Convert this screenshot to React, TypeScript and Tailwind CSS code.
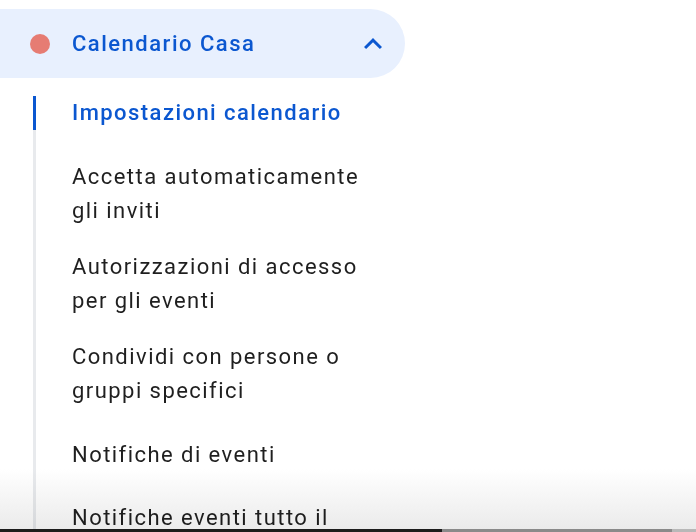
const items = [
  { label: "Impostazioni calendario", active: true, gap: "mt-0" },
  { label: "Accetta automaticamente gli inviti", gap: "mt-[30px]" },
  { label: "Autorizzazioni di accesso per gli eventi", gap: "mt-[22px]" },
  { label: "Condividi con persone o gruppi specifici", gap: "mt-[22px]" },
  { label: "Notifiche di eventi", gap: "mt-[30px]" },
  { label: "Notifiche eventi tutto il giorno", gap: "mt-[29px]" },
];

export default function App() {
  return (
    <div
      className="relative flex h-[532px] w-[696px] flex-col overflow-hidden bg-white"
      style={{ fontFamily: "Roboto, 'Noto Sans', sans-serif" }}
    >
      <div className="flex-1 overflow-hidden">
        {/* Calendar header */}
        <div className="mt-[9px] flex h-[69px] w-[405px] items-center rounded-r-full bg-[#e8f0fe] pl-[30px] pr-[14px]">
          <span className="h-[20px] w-[20px] shrink-0 rounded-full bg-[#e67c73]" />
          <span className="ml-[22px] flex-1 text-[22px] font-medium tracking-[1.5px] text-[#0b57d0]">
            Calendario Casa
          </span>
          <svg viewBox="0 0 24 24" className="h-[36px] w-[36px] fill-[#0b57d0]">
            <path d="M12 8l-6 6 1.41 1.41L12 10.83l4.59 4.58L18 14z" />
          </svg>
        </div>

        {/* Settings list */}
        <div className="ml-[33px] mt-[18px] h-full border-l-[3px] border-[#e8eaed] pl-[36px]">
          {items.map((item) => (
            <div
              key={item.label}
              className={`relative w-[300px] text-[22px] leading-[34px] tracking-[1.45px] ${item.gap} ${
                item.active ? "font-medium text-[#0b57d0]" : "text-[#1f1f1f]"
              }`}
            >
              {item.active && <span className="absolute -left-[39px] top-0 h-full w-[3px] bg-[#0b57d0]" />}
              {item.label}
            </div>
          ))}
        </div>
      </div>

      {/* bottom shade */}
      <div className="pointer-events-none absolute bottom-[3px] left-0 h-[60px] w-full bg-gradient-to-b from-white to-[#ebebeb] mix-blend-multiply" />
      <div className="flex h-[3px] w-full">
        <div className="w-[442px] bg-[#1c1c1c]" />
        <div className="w-[230px] bg-[#8a8a8a]" />
        <div className="flex-1 bg-[#b8b8b8]" />
      </div>
    </div>
  );
}
